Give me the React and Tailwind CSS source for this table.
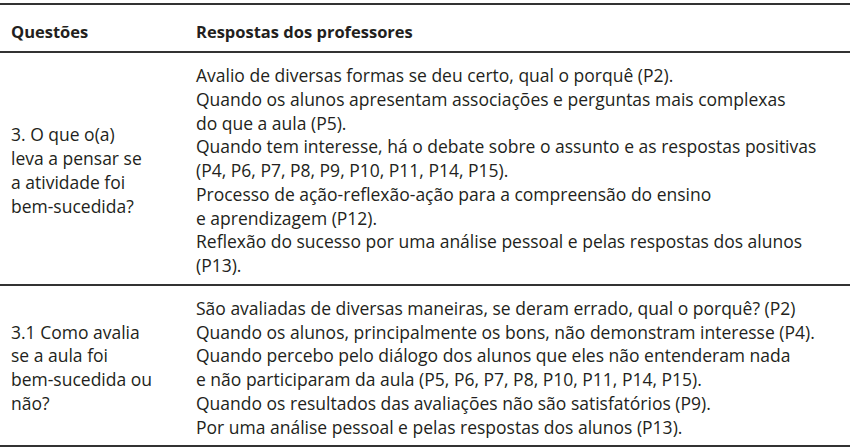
const rows = [
  {
    q: ["3. O que o(a)", "leva a pensar se", "a atividade foi", "bem-sucedida?"],
    a: [
      "Avalio de diversas formas se deu certo, qual o porquê (P2).",
      "Quando os alunos apresentam associações e perguntas mais complexas",
      "do que a aula (P5).",
      "Quando tem interesse, há o debate sobre o assunto e as respostas positivas",
      "(P4, P6, P7, P8, P9, P10, P11, P14, P15).",
      "Processo de ação-reflexão-ação para a compreensão do ensino",
      "e aprendizagem (P12).",
      "Reflexão do sucesso por uma análise pessoal e pelas respostas dos alunos",
      "(P13).",
    ],
  },
  {
    q: ["3.1 Como avalia", "se a aula foi", "bem-sucedida ou", "não?"],
    a: [
      "São avaliadas de diversas maneiras, se deram errado, qual o porquê? (P2)",
      "Quando os alunos, principalmente os bons, não demonstram interesse (P4).",
      "Quando percebo pelo diálogo dos alunos que eles não entenderam nada",
      "e não participaram da aula (P5, P6, P7, P8, P10, P11, P14, P15).",
      "Quando os resultados das avaliações não são satisfatórios (P9).",
      "Por uma análise pessoal e pelas respostas dos alunos (P13).",
    ],
  },
];

export default function App() {
  return (
    <div className="w-[850px] h-[448px] bg-white pt-[3px] font-['Open_Sans',sans-serif] text-[17.5px] text-[#231f20]">
      <div className="border-t-2 border-[#333]">
        <div className="grid grid-cols-[185px_1fr] h-[48px] items-center pt-[8px] border-b-2 border-[#333] font-bold text-[16.5px]">
          <div className="pl-[11px]">Questões</div>
          <div className="pl-[11px]">Respostas dos professores</div>
        </div>
        {rows.map((r, i) => (
          <div
            key={i}
            className="grid grid-cols-[185px_1fr] items-center leading-[23.75px] pt-[11px] pb-[6px] border-b-2 border-[#333]"
          >
            <div className="pl-[11px]">
              {r.q.map((l) => (
                <div key={l} className="whitespace-nowrap">{l}</div>
              ))}
            </div>
            <div className="pl-[11px]">
              {r.a.map((l) => (
                <div key={l} className="whitespace-nowrap">{l}</div>
              ))}
            </div>
          </div>
        ))}
      </div>
    </div>
  );
}
